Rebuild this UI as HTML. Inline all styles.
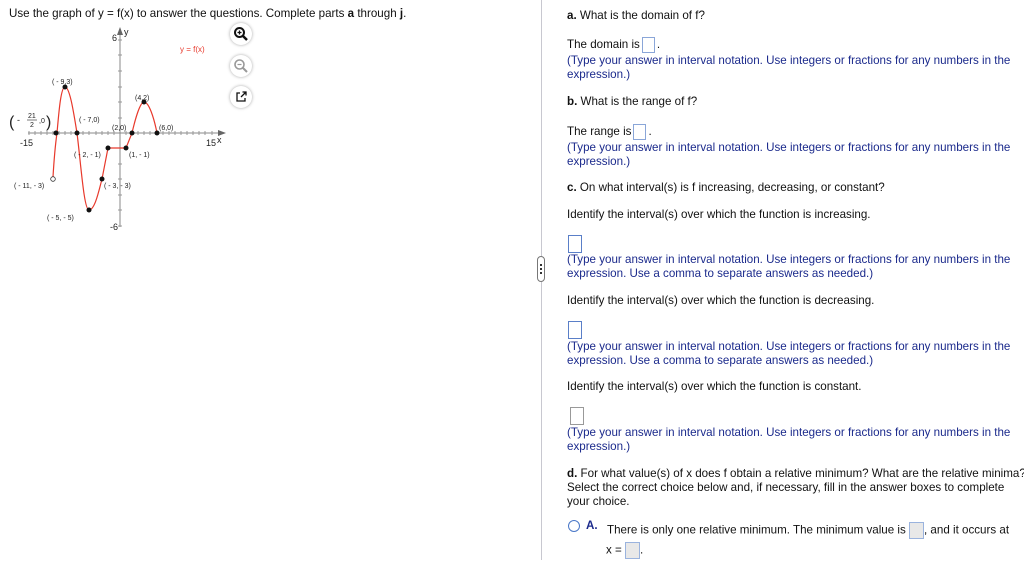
<!DOCTYPE html>
<html><head><meta charset="utf-8"><style>
body{margin:0;width:1024px;height:570px;background:#fff;font-family:"Liberation Sans",Arial,sans-serif;font-size:11.6px;color:#111;position:relative;overflow:hidden}
.t{position:absolute;white-space:nowrap;line-height:14px}
.b{color:#1b2a8c}
.box{display:inline-block;width:13px;height:16px;border:1px solid #8aa6d8;vertical-align:middle;margin:0 2px;box-sizing:border-box}
.bigbox{position:absolute;width:14px;height:18px;border:1px solid #5a7fc8;box-sizing:border-box}
.gbox{display:inline-block;width:15px;height:17px;border:1px solid #9ab3de;background:#e8e8e8;vertical-align:middle;box-sizing:border-box}
.ic{position:absolute;width:22px;height:22px;border-radius:50%;background:#fff;box-shadow:0 0 3px rgba(0,0,0,.35)}
</style></head><body>
<div class="t" style="left:9px;top:7px">Use the graph of y = f(x) to answer the questions. Complete parts <b>a</b> through <b>j</b>.</div>

<svg style="position:absolute;left:0;top:20px" width="230" height="220" viewBox="0 20 230 220" font-family="Liberation Sans,Arial,sans-serif">
<g stroke="#888" stroke-width="1">
<line x1="28" y1="133" x2="222" y2="133"/>
<line x1="120" y1="227" x2="120" y2="30"/>
</g>
<g stroke="#999" stroke-width="1">
<path d="M29 131v4M35 131v4M41 131v4M47 131v4M53 131v4M59 131v4M65 131v4M71 131v4M77 131v4M83 131v4M89 131v4M96 131v4M102 131v4M108 131v4M114 131v4M126 131v4M132 131v4M138 131v4M144 131v4M150 131v4M157 131v4M163 131v4M169 131v4M175 131v4M181 131v4M187 131v4M193 131v4M199 131v4M205 131v4M212 131v4"/>
<path d="M118 40h4M118 55h4M118 71h4M118 87h4M118 102h4M118 118h4M118 148h4M118 164h4M118 179h4M118 195h4M118 210h4M118 226h4"/>
</g>
<polygon points="226,133 218,130 218,136" fill="#666"/>
<polygon points="120,27 117,35 123,35" fill="#666"/>
<path d="M53 177 C54 160 56 140 57 133 C59 110 61 87 65 87 C70 87 74 115 77 133 C81 165 84 210 89 210 C95 210 99 190 102 179 L108 148 L126 148 L132 133 C135 120 140 102 144 102 C149 102 154 118 157 133" fill="none" stroke="#e8392c" stroke-width="1.2"/>
<circle cx="53" cy="179" r="2.3" fill="#fff" stroke="#333" stroke-width="0.8"/>
<g fill="#111"><circle cx="56" cy="133" r="2.5"/><circle cx="65" cy="87" r="2.5"/><circle cx="77" cy="133" r="2.5"/><circle cx="89" cy="210" r="2.5"/><circle cx="102" cy="179" r="2.5"/><circle cx="108" cy="148" r="2.5"/><circle cx="126" cy="148" r="2.5"/><circle cx="132" cy="133" r="2.5"/><circle cx="144" cy="102" r="2.5"/><circle cx="157" cy="133" r="2.5"/></g>
<g font-size="7" fill="#222">
<text x="112" y="41" font-size="9">6</text><text x="124" y="35" font-size="9">y</text>
<text x="20" y="146" font-size="9">-15</text><text x="206" y="146" font-size="9">15</text><text x="217" y="143" font-size="9">x</text>
<text x="110" y="230" font-size="9">-6</text>
<text x="52" y="84">( - 9,3)</text>
<text x="135" y="100">(4,2)</text>
<text x="79" y="122">( - 7,0)</text>
<text x="112" y="130">(2,0)</text>
<text x="159" y="130">(6,0)</text>
<text x="74" y="157">( - 2, - 1)</text>
<text x="129" y="157">(1, - 1)</text>
<text x="14" y="188">( - 11, - 3)</text>
<text x="104" y="188">( - 3, - 3)</text>
<text x="47" y="220">( - 5, - 5)</text>
<text x="9" y="127" font-size="16">(</text><text x="17" y="123" font-size="9">-</text><text x="28" y="118">21</text><line x1="27" y1="120" x2="37" y2="120" stroke="#222" stroke-width=".6"/><text x="30" y="127">2</text><text x="39" y="123">,0</text><text x="46" y="127" font-size="16">)</text>
<text x="180" y="52" fill="#e8392c" font-size="8">y = f(x)</text>
</g>
</svg>

<div class="ic" style="left:230px;top:23px"><svg width="22" height="22"><circle cx="9.5" cy="9.5" r="4.5" fill="none" stroke="#111" stroke-width="2"/><path d="M13 13l4 4" stroke="#111" stroke-width="2.5"/><path d="M7.5 9.5h4M9.5 7.5v4" stroke="#111" stroke-width="1.3"/></svg></div>
<div class="ic" style="left:230px;top:55px"><svg width="22" height="22"><circle cx="9.5" cy="9.5" r="4.5" fill="none" stroke="#999" stroke-width="1.6"/><path d="M13 13l4 4" stroke="#999" stroke-width="2"/><path d="M7.5 9.5h4" stroke="#999" stroke-width="1.2"/></svg></div>
<div class="ic" style="left:230px;top:86px"><svg width="22" height="22"><path d="M10 7H7v8h8v-3" fill="none" stroke="#111" stroke-width="1.3"/><path d="M11 11l5-5M12.5 6H16v3.5" fill="none" stroke="#111" stroke-width="1.3"/></svg></div>

<div style="position:absolute;left:541px;top:0;width:1px;height:560px;background:#c8c8d0"></div>
<div style="position:absolute;left:537px;top:256px;width:8px;height:26px;border:1px solid #777;border-radius:4px;background:#fff;box-sizing:border-box"><div style="width:2px;height:2px;background:#333;margin:7px auto 2px"></div><div style="width:2px;height:2px;background:#333;margin:0 auto 2px"></div><div style="width:2px;height:2px;background:#333;margin:0 auto"></div></div>

<div class="t" style="left:567px;top:9px"><b>a.</b> What is the domain of f?</div>
<div class="t" style="left:567px;top:37px">The domain is<span class="box"></span>.</div>
<div class="t b" style="left:567px;top:54px">(Type your answer in interval notation. Use integers or fractions for any numbers in the<br>expression.)</div>
<div class="t" style="left:567px;top:95px"><b>b.</b> What is the range of f?</div>
<div class="t" style="left:567px;top:124px">The range is<span class="box"></span>.</div>
<div class="t b" style="left:567px;top:141px">(Type your answer in interval notation. Use integers or fractions for any numbers in the<br>expression.)</div>
<div class="t" style="left:567px;top:181px"><b>c.</b> On what interval(s) is f increasing, decreasing, or constant?</div>
<div class="t" style="left:567px;top:208px">Identify the interval(s) over which the function is increasing.</div>
<div class="bigbox" style="left:568px;top:235px"></div>
<div class="t b" style="left:567px;top:253px">(Type your answer in interval notation. Use integers or fractions for any numbers in the<br>expression. Use a comma to separate answers as needed.)</div>
<div class="t" style="left:567px;top:294px">Identify the interval(s) over which the function is decreasing.</div>
<div class="bigbox" style="left:568px;top:321px"></div>
<div class="t b" style="left:567px;top:340px">(Type your answer in interval notation. Use integers or fractions for any numbers in the<br>expression. Use a comma to separate answers as needed.)</div>
<div class="t" style="left:567px;top:380px">Identify the interval(s) over which the function is constant.</div>
<div class="bigbox" style="left:570px;top:407px;border-color:#999"></div>
<div class="t b" style="left:567px;top:426px">(Type your answer in interval notation. Use integers or fractions for any numbers in the<br>expression.)</div>
<div class="t" style="left:567px;top:467px"><b>d.</b> For what value(s) of x does f obtain a relative minimum? What are the relative minima?<br>Select the correct choice below and, if necessary, fill in the answer boxes to complete<br>your choice.</div>
<div style="position:absolute;left:568px;top:520px;width:12px;height:12px;border:1.5px solid #4a78c8;border-radius:50%;box-sizing:border-box"></div>
<div class="t" style="left:586px;top:519px;color:#1b2a8c;font-weight:bold">A.</div>
<div class="t" style="left:607px;top:522px">There is only one relative minimum. The minimum value is <span class="gbox"></span>, and it occurs at</div>
<div class="t" style="left:606px;top:542px">x = <span class="gbox"></span>.</div>
</body></html>
